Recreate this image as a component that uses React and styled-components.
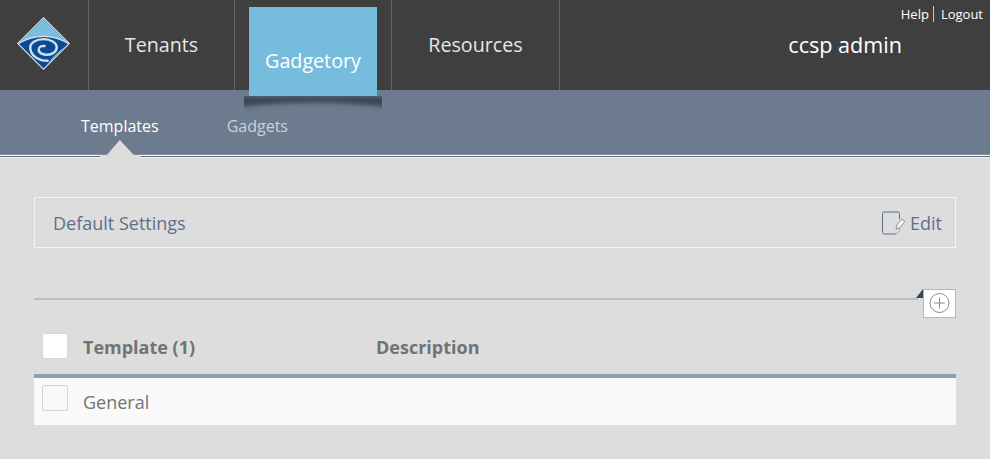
import React from "react";
import styled, { createGlobalStyle } from "styled-components";

const GlobalStyle = createGlobalStyle`
    html, body {
        margin: 0;
        padding: 0;
        background: #dddddd;
        font-family: "Open Sans", "Liberation Sans", sans-serif;
    }
`;

const Page = styled.div`
    width: 990px;
    height: 459px;
    overflow: hidden;
    background: #dddddd;
`;

const Header = styled.header`
    display: flex;
    height: 90px;
    background: #3f3f3f;
`;

const LogoCell = styled.div`
    display: flex;
    width: 71px;
    height: 73px;
    padding: 17px 0 0 17px;
    border-right: 1px solid #5d6670;
`;

const NavCell = styled.div`
    width: ${(props) => props.$width}px;
    display: flex;
    justify-content: center;
    border-right: 1px solid #5d6670;
    font-size: 19.7px;
    line-height: 90px;
    color: #e6e6e6;
`;

const ActiveTile = styled.div`
    position: relative;
    z-index: 2;
    width: 128px;
    height: 89px;
    margin-top: 7px;
    background: #76bcdd;
    color: #ffffff;
    text-align: center;
    line-height: 108px;
`;

const TileShadow = styled.svg`
    position: absolute;
    left: -5px;
    top: 89px;
    z-index: -1;
`;

const UserArea = styled.div`
    flex: 1;
    position: relative;
    display: flex;
    justify-content: flex-end;
    padding-right: 88px;
    font-size: 21.6px;
    line-height: 90px;
    color: #ffffff;
`;

const TopLinks = styled.div`
    position: absolute;
    top: 6px;
    right: 7px;
    display: flex;
    align-items: center;
    font-size: 13px;
    line-height: 16px;
    color: #ffffff;
`;

const TopLink = styled.span`
    padding: 0 ${(props) => (props.$last ? 0 : 4)}px 0 ${(props) => (props.$last ? 7 : 0)}px;
    border-right: ${(props) => (props.$last ? "none" : "1px solid #c8c8c8")};
`;

const SubNav = styled.nav`
    display: flex;
    height: 64px;
    padding-left: 81px;
    gap: 68px;
    background: #6c7b8e;
    border-bottom: 1px solid #7f8c9c;
    font-size: 16px;
    line-height: 73px;
`;

const SubTab = styled.div`
    position: relative;
    color: ${(props) => (props.$active ? "#ffffff" : "#ccd1d8")};
    &::after {
        content: "";
        display: ${(props) => (props.$active ? "block" : "none")};
        position: absolute;
        left: 50%;
        top: 50px;
        margin-left: -20px;
        width: 41px;
        height: 18px;
        background: #dddddd;
        clip-path: polygon(20px 0, 34px 15px, 41px 15px, 41px 18px, 0 18px, 0 15px, 7px 15px);
    }
`;

const HeaderRule = styled.div`
    height: 3px;
    background: linear-gradient(#ffffff 0 1px, #5e6b7c 1px 2px, #f0f0f0 2px 3px);
`;

const Content = styled.main`
    padding: 39px 34px 0;
`;

const SettingsBar = styled.section`
    height: 49px;
    display: flex;
    align-items: center;
    justify-content: space-between;
    padding: 0 13px 0 18px;
    border: 1px solid #f4f4f4;
    font-size: 18px;
    color: #5e7088;
`;

const EditLink = styled.div`
    display: flex;
    align-items: center;
    gap: 4px;
`;

const AddBar = styled.div`
    position: relative;
    height: 2px;
    margin: 50px 38px 0 0;
    background: #b0c1c8;
`;

const AddNotch = styled.div`
    position: absolute;
    right: -5px;
    top: -9px;
    width: 0;
    height: 0;
    border-style: solid;
    border-width: 0 0 9px 7px;
    border-color: transparent transparent #34465c transparent;
`;

const AddButton = styled.button`
    position: absolute;
    right: -38px;
    top: -9px;
    width: 33px;
    height: 29px;
    padding: 0;
    display: flex;
    align-items: center;
    justify-content: center;
    box-sizing: border-box;
    background: #ffffff;
    border: 1px solid #a9bcc4;
`;

const TableHead = styled.div`
    display: grid;
    grid-template-columns: 41px 293px 1fr;
    align-items: center;
    height: 56px;
    padding: 18px 0 0 8px;
    border-bottom: 4px solid #86a3ae;
    font-size: 18px;
    font-weight: 700;
    color: #737373;
`;

const HeadLabel = styled.span`
    padding-top: 2px;
`;

const TableRow = styled.div`
    display: grid;
    grid-template-columns: 41px 293px 1fr;
    align-items: center;
    height: 47px;
    padding-left: 8px;
    background: #f9f9f9;
    font-size: 18px;
    color: #737373;
`;

const Check = styled.span`
    display: block;
    width: 26px;
    height: 26px;
    box-sizing: border-box;
    background: ${(props) => (props.$head ? "#ffffff" : "#f9f9f9")};
    border: 1px solid #d9d5cf;
    border-radius: 2px;
    margin-top: ${(props) => (props.$head ? 0 : -7)}px;
`;

function Logo() {
    return (
        <svg width="53" height="53" viewBox="0 0 52 52">
            <polygon points="26,0 52,26 26,52 0,26" fill="#e8edf0" />
            <polygon points="26,1.5 50.5,26 26,50.5 1.5,26" fill="#0b4a96" />
            <path d="M26 1.5 L50.5 26 C42 21 34 19 26 19 C18 19 10 21 1.5 26 Z" fill="#7cbedd" />
            <path d="M1.5 26 C10 21 18 19 26 19 C34 19 42 21 50.5 26" fill="none" stroke="#dce6ec" strokeWidth="1" />
            <path d="M47.5 29 Q37 36 28.5 48 Z" fill="#7cbedd" />
            <path
                d="M30 43 C20 43 13 37 13 30 C13 25 19 21.7 26 21.7 C33 21.7 39 25 39 30 C39 34 34 37 30 37 C25 37 21 35 21.3 32 C21.5 29 24 28 27 28.5"
                fill="none"
                stroke="#d4dfe6"
                strokeWidth="2.4"
                strokeLinecap="round"
            />
        </svg>
    );
}

function EditIcon() {
    return (
        <svg width="24" height="24" viewBox="0 0 24 24" fill="none">
            <path d="M14 23H2Q.5 23 .5 21.5V2.5Q.5 1 2 1H16Q17.5 1 17.5 2.5V8" stroke="#5e7088" strokeWidth="1" />
            <path d="M17.5 16V20.5L14 23" stroke="#a3afbd" strokeWidth="1" />
            <path d="M14 18.5L14.8 14L19.5 8L23 10.5L18.2 16.5Z" fill="#f3f3f3" stroke="#8695a6" strokeWidth="1" />
        </svg>
    );
}

function PlusIcon() {
    return (
        <svg width="21" height="21" viewBox="0 0 21 21" fill="none" stroke="#7f8c9c">
            <circle cx="10.5" cy="10" r="9.5" />
            <path d="M10.5 4.5V15.5M5 10H16" />
        </svg>
    );
}

export default function App() {
    return (
        <Page>
            <GlobalStyle />
            <Header>
                <LogoCell>
                    <Logo />
                </LogoCell>
                <NavCell $width={145}>Tenants</NavCell>
                <NavCell $width={156}>
                    <ActiveTile>
                        Gadgetory
                        <TileShadow width="138" height="18" viewBox="0 0 138 18">
                            <defs>
                                <filter id="soft" x="-5%" y="-50%" width="110%" height="200%">
                                    <feGaussianBlur stdDeviation="2" />
                                </filter>
                            </defs>
                            <path d="M-4 0H142V11Q69 2 -4 11Z" fill="#343d4b" opacity="0.85" filter="url(#soft)" />
                        </TileShadow>
                    </ActiveTile>
                </NavCell>
                <NavCell $width={167}>Resources</NavCell>
                <UserArea>
                    ccsp admin
                    <TopLinks>
                        <TopLink>Help</TopLink>
                        <TopLink $last>Logout</TopLink>
                    </TopLinks>
                </UserArea>
            </Header>
            <SubNav>
                <SubTab $active>Templates</SubTab>
                <SubTab>Gadgets</SubTab>
            </SubNav>
            <HeaderRule />
            <Content>
                <SettingsBar>
                    Default Settings
                    <EditLink>
                        <EditIcon />
                        Edit
                    </EditLink>
                </SettingsBar>
                <AddBar>
                    <AddNotch />
                    <AddButton>
                        <PlusIcon />
                    </AddButton>
                </AddBar>
                <TableHead>
                    <Check $head />
                    <HeadLabel>Template (1)</HeadLabel>
                    <HeadLabel>Description</HeadLabel>
                </TableHead>
                <TableRow>
                    <Check />
                    <span>General</span>
                </TableRow>
            </Content>
        </Page>
    );
}
